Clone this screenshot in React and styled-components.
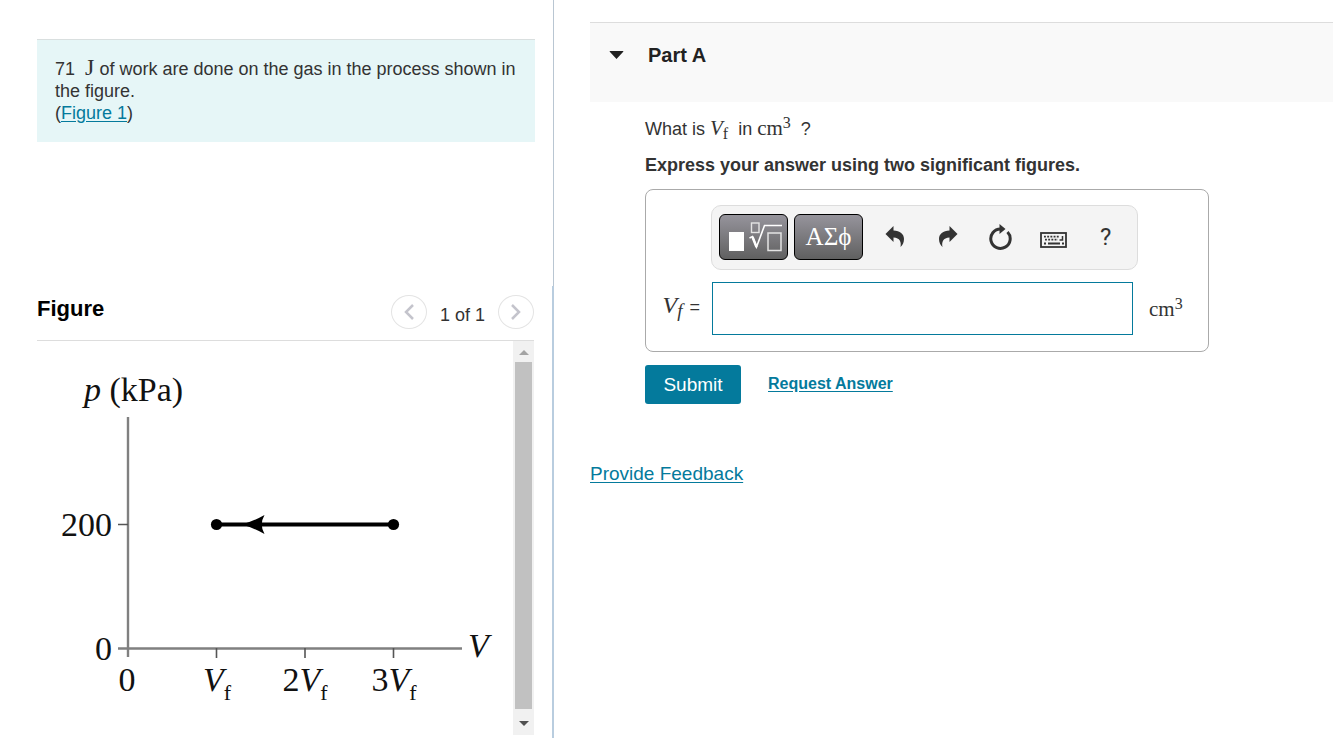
import { useState } from "react"
import styled, { createGlobalStyle } from "styled-components"


const GlobalStyle = createGlobalStyle`
    * {
        box-sizing: border-box;
    }

    body {
        margin: 0;
        background: #fff;
        color: #333;
        font-family: "Liberation Sans", Arial, sans-serif;
        font-size: 18px;
        line-height: 22px;
    }
`

const Page = styled.div`
    display: grid;
    grid-template-columns: 554px minmax(0, 1fr);
    min-height: 100vh;
`

const Side = styled.aside`
    display: flex;
    flex-direction: column;
`

const IntroPane = styled.section`
    min-height: 286px;
    padding: 39px 18px 0 37px;
    border-right: 1px solid #b9c6d2;
`

const Intro = styled.p`
    margin: 0;
    min-height: 103px;
    padding: 18px;
    border-top: 1px solid #d9dfdf;
    background: #e6f6f7;
`

const Link = styled.a`
    color: #047a9c;
    text-decoration: underline;
    text-underline-offset: 2px;
    font-size: ${p => p.$size || 18}px;
    font-weight: ${p => p.$bold ? 700 : 400};
`

const MathText = styled.span`
    font-family: "Liberation Serif", "Times New Roman", serif;
    font-size: ${p => p.$large ? 24 : 21}px;
    line-height: 16px;
    white-space: nowrap;

    sub, sup {
        font-size: ${p => p.$large ? 19 : 16}px;
        line-height: 0;
    }

    sup {
        vertical-align: 7px;
    }

    sub {
        vertical-align: -4px;
    }
`

const FigurePane = styled.section`
    flex: 1;
    padding: 0 18px 0 37px;
    border-right: 2px solid #b9cddf;
`

const FigureHeader = styled.header`
    display: flex;
    align-items: center;
    justify-content: space-between;
    height: 55px;
    border-bottom: 1px solid #ddd;
`

const FigureTitle = styled.h2`
    margin: 0;
    padding-bottom: 8px;
    color: #000;
    font-size: 22px;
    line-height: 24px;
`

const Pager = styled.nav`
    display: flex;
    align-items: center;
    gap: 13px;
    padding-bottom: 2px;
`

const PagerCount = styled.span`
    padding-top: 5px;
`

const PagerButton = styled.button`
    display: grid;
    place-items: center;
    width: 36px;
    height: 34px;
    padding: 0;
    border: 1px solid #e4e4e4;
    border-radius: 50%;
    background: #fff;
`

const FigureView = styled.div`
    display: grid;
    grid-template-columns: minmax(0, 1fr) 21px;
    height: 394px;
`

const Chart = styled.svg`
    display: block;
    width: 100%;
    height: 394px;
    font-family: "Liberation Serif", "Times New Roman", serif;
    font-size: 34px;
    fill: #111;
`

const Scrollbar = styled.div`
    display: flex;
    flex-direction: column;
    padding: 0 2px;
    background: #f1f1f1;
`

const ScrollArrow = styled.div`
    display: grid;
    place-items: center;
    height: ${p => p.$down ? 26 : 21}px;
    padding-top: 2px;

    svg {
        display: block;
    }
`

const ScrollThumb = styled.div`
    flex: 1;
    background: #c1c1c1;
`

const Main = styled.main`
    padding: 22px 0 0 36px;
`

const PartHeader = styled.header`
    height: 80px;
    border-top: 1px solid #ddd;
    background: #f9f9f9;
`

const PartToggle = styled.button`
    display: flex;
    align-items: center;
    gap: 24px;
    padding: 20px 18px;
    border: 0;
    background: transparent;
    color: #222;
    font: 700 20px/24px "Liberation Sans", Arial, sans-serif;
`

const PartBody = styled.div`
    padding: 16px 24px 0 55px;
`

const Question = styled.p`
    margin: 0 0 14px;
`

const Instruction = styled.p`
    margin: 0 0 13px;
    font-weight: 700;
`

const AnswerBox = styled.div`
    display: grid;
    grid-template-columns: 65px minmax(0, 427px) 1fr;
    row-gap: 12px;
    max-width: 564px;
    padding: 15px 0 16px;
    border: 1px solid #aaa;
    border-radius: 8px;
`

const Toolbar = styled.div`
    grid-column: 2;
    display: flex;
    align-items: center;
    gap: 6px;
    height: 65px;
    padding: 0 5px 2px 7px;
    border: 1px solid #ddd;
    border-radius: 10px;
    background: #f4f4f4;
`

const PaletteButton = styled.button`
    display: grid;
    place-items: center;
    width: 69px;
    height: 46px;
    padding: 0;
    border: 1px solid #000;
    border-radius: 6px;
    background: linear-gradient(#96949c, #606060);
    color: #fff;
    font: 25px/30px "Liberation Serif", "Times New Roman", serif;
`

const ToolGroup = styled.div`
    flex: 1;
    display: flex;
`

const ToolButton = styled.button`
    flex: 1;
    display: grid;
    place-items: center;
    height: 46px;
    padding: 0;
    border: 0;
    background: transparent;
    color: #333;
    font: 24px/28px Roboto, sans-serif;
`

const AnswerLabel = styled.label`
    grid-column: 1;
    align-self: center;
    display: flex;
    align-items: baseline;
    justify-content: flex-end;
    gap: 7px;
    padding: 0 11px 4px 0;
    white-space: nowrap;
`

const AnswerInput = styled.input`
    width: calc(100% - 6px);
    height: 53px;
    margin: 0 1px;
    padding: 0 10px;
    border: 1px solid #047a9c;
    background: #fff;
    color: #333;
    font-size: 20px;
    outline: none;
`

const Unit = styled.span`
    align-self: center;
    padding: 2px 0 0 11px;
`

const Actions = styled.div`
    display: flex;
    align-items: center;
    gap: 27px;
    padding-top: 13px;

    a {
        padding-bottom: 2px;
    }
`

const SubmitButton = styled.button`
    width: 96px;
    height: 39px;
    padding: 0;
    border: 0;
    border-radius: 3px;
    background: #047a9c;
    color: #fff;
    font: 19px/22px "Liberation Sans", Arial, sans-serif;
`

const Feedback = styled.footer`
    padding-top: 59px;
`


const ticks = [
    { x: 90, label: "0" },
    { x: 180, label: "V", sub: true },
    { x: 268, label: "V", factor: "2", sub: true },
    { x: 357, label: "V", factor: "3", sub: true },
]

const PressureChart = () => (
    <Chart viewBox="0 0 476 394" preserveAspectRatio="xMinYMin meet" role="img" aria-label="Pressure against volume">
        <text x="47" y="60"><tspan fontStyle="italic">p</tspan> (kPa)</text>
        <text x="75" y="195" textAnchor="end">200</text>
        <text x="75" y="319" textAnchor="end">0</text>
        <text x="431" y="316" fontStyle="italic">V</text>

        <g stroke="#808080" strokeWidth="2.4" fill="none">
            <path d="M91 76V316M81 307.500H425" />
            <path d="M81 183.500H91M179.500 307V317M268 307V317M356.500 307V317" strokeWidth="1.600" stroke="#555" />
        </g>

        {ticks.map(t => (
            <text key={t.x} x={t.x} y="350" textAnchor="middle">
                {t.factor}
                <tspan fontStyle={t.sub ? "italic" : "normal"}>{t.label}</tspan>
                {t.sub && <tspan fontSize="22" dy="9">f</tspan>}
            </text>
        ))}

        <g fill="#000">
            <path d="M179 183.500H356" stroke="#000" strokeWidth="4" />
            <circle cx="179.500" cy="183.500" r="5.600" />
            <circle cx="356.500" cy="183.500" r="5.600" />
            <path d="M205 183.500Q217 180 227.500 174Q222 183.500 227.500 193Q217 187 205 183.500Z" />
        </g>
    </Chart>
)

const TemplateIcon = () => (
    <svg width="56" height="34" viewBox="0 0 56 34" fill="none" stroke="#fff">
        <path d="M3 12H18V31H3Z" fill="#fff" stroke="none" />
        <rect x="25.500" y="3" width="7.500" height="9.500" stroke="#e4e4e4" strokeWidth="1.400" />
        <path d="M23.500 18L26.500 16.500L30.500 27L38.500 5.500H56" strokeWidth="1.600" />
        <path d="M26.500 17L30.500 27" strokeWidth="2.500" />
        <rect x="42" y="13" width="13" height="17.500" stroke="#e4e4e4" strokeWidth="1.500" />
    </svg>
)

const UndoIcon = ({ flip }) => (
    <svg width="20" height="22" viewBox="0 0 20 22" fill="#333">
        <path
            d="M0.500 8L8.500 0V4.500C15 4.800 19 8 19 13C19 16.500 17.500 19.500 15.500 21C16.500 16 15 11.800 8.500 11.500V16Z"
            transform={flip ? "translate(20 0) scale(-1 1)" : undefined}
        />
    </svg>
)

const ResetIcon = () => (
    <svg width="24" height="26" viewBox="0 0 24 26" fill="none">
        <path d="M12.500 5A9.700 9.700 0 1 0 19.500 8" stroke="#333" strokeWidth="3" />
        <path d="M11.500 0L17.500 5L11.500 10Z" fill="#333" />
    </svg>
)

const KeyboardIcon = () => (
    <svg width="28" height="22" viewBox="0 0 28 22" fill="none" stroke="#333">
        <rect x="2" y="7" width="25" height="14" strokeWidth="1.800" />
        <path d="M5 10.700H21M6 13.700H19" strokeWidth="1.800" strokeDasharray="1.900 1.300" />
        <path d="M23.500 10V14H20.500" strokeWidth="1.500" />
        <path d="M5 17.500H7M9 17.500H21M23 17.500H25" strokeWidth="1.800" />
    </svg>
)


const App = () => {

    let [isOpen, setIsOpen] = useState(true)
    let [answer, setAnswer] = useState("")

    return <Page>
        <GlobalStyle />
        <Side>
            <IntroPane>
                <Intro>
                    71 &nbsp;<MathText $large>J</MathText> of work are done on the gas in the process shown in the figure.
                    <br />
                    (<Link href="#figure">Figure 1</Link>)
                </Intro>
            </IntroPane>

            <FigurePane id="figure">
                <FigureHeader>
                    <FigureTitle>Figure</FigureTitle>
                    <Pager aria-label="Figures">
                        <PagerButton type="button" aria-label="Previous figure">
                            <svg width="12" height="18" viewBox="0 0 12 18" fill="none" stroke="#c4c4cc" strokeWidth="2.500">
                                <path d="M10 2L3 9L10 16" />
                            </svg>
                        </PagerButton>
                        <PagerCount>1 of 1</PagerCount>
                        <PagerButton type="button" aria-label="Next figure">
                            <svg width="12" height="18" viewBox="0 0 12 18" fill="none" stroke="#c4c4cc" strokeWidth="2.500">
                                <path d="M2 2L9 9L2 16" />
                            </svg>
                        </PagerButton>
                    </Pager>
                </FigureHeader>
                <FigureView>
                    <PressureChart />
                    <Scrollbar>
                        <ScrollArrow>
                            <svg width="10" height="5" viewBox="0 0 10 5" fill="#a3a3a3"><path d="M0 5L5 0L10 5Z" /></svg>
                        </ScrollArrow>
                        <ScrollThumb />
                        <ScrollArrow $down>
                            <svg width="10" height="5" viewBox="0 0 10 5" fill="#505050"><path d="M0 0H10L5 5Z" /></svg>
                        </ScrollArrow>
                    </Scrollbar>
                </FigureView>
            </FigurePane>
        </Side>

        <Main>
            <PartHeader>
                <PartToggle type="button" aria-expanded={isOpen} onClick={() => setIsOpen(!isOpen)}>
                    <svg width="16" height="9" viewBox="0 0 16 9" fill="#222"><path d="M2 0H15Q16 0 15 1L8.500 8L2 1Q1 0 2 0Z" /></svg>
                    Part A
                </PartToggle>
            </PartHeader>

            {isOpen && <PartBody>
                <Question>
                    What is <MathText><i>V</i><sub>f</sub></MathText> &nbsp;in <MathText>cm<sup>3</sup></MathText> &nbsp;?
                </Question>
                <Instruction>Express your answer using two significant figures.</Instruction>

                <AnswerBox>
                    <Toolbar role="toolbar" aria-label="Equation tools">
                        <PaletteButton type="button" aria-label="Templates"><TemplateIcon /></PaletteButton>
                        <PaletteButton type="button">ΑΣϕ</PaletteButton>
                        <ToolGroup>
                            <ToolButton type="button" aria-label="Undo"><UndoIcon /></ToolButton>
                            <ToolButton type="button" aria-label="Redo"><UndoIcon flip /></ToolButton>
                            <ToolButton type="button" aria-label="Reset"><ResetIcon /></ToolButton>
                            <ToolButton type="button" aria-label="Keyboard shortcuts"><KeyboardIcon /></ToolButton>
                            <ToolButton type="button">?</ToolButton>
                        </ToolGroup>
                    </Toolbar>
                    <AnswerLabel htmlFor="answer">
                        <MathText $large><i>V<sub>f</sub></i></MathText> =
                    </AnswerLabel>
                    <AnswerInput id="answer" type="text" value={answer} onChange={e => setAnswer(e.target.value)} />
                    <Unit><MathText>cm<sup>3</sup></MathText></Unit>
                </AnswerBox>

                <Actions>
                    <SubmitButton type="submit">Submit</SubmitButton>
                    <Link href="#answer" $bold $size={16}>Request Answer</Link>
                </Actions>
            </PartBody>}

            <Feedback>
                <Link href="#feedback" $size={19}>Provide Feedback</Link>
            </Feedback>
        </Main>
    </Page>
}


export default App
